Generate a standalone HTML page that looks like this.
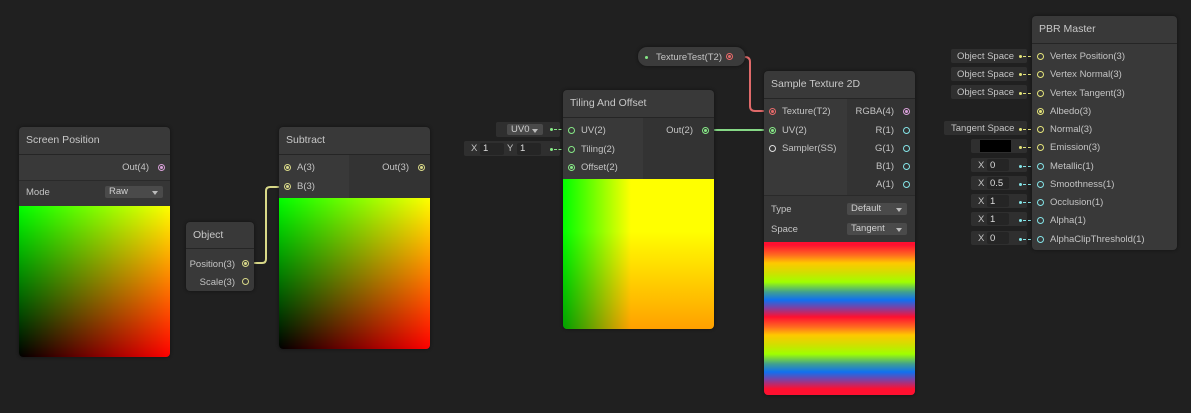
<!DOCTYPE html><html><head><style>
body{margin:0;width:1191px;height:413px;background:#202020;overflow:hidden;position:relative;font-family:"Liberation Sans",sans-serif;font-size:9.5px;color:#c4c4c4}
.n{position:absolute;background:#393939;border-radius:4px;box-shadow:0 0 3px #111}
.h{position:absolute;left:0;right:0;top:0;border-bottom:1px solid #252525;font-size:10.5px;color:#c8c8c8;padding-left:7px;box-sizing:border-box}
.t{position:absolute;white-space:nowrap}
.p{position:absolute;width:5px;height:5px;border:1.3px solid;border-radius:50%}
.p.c::after{content:"";position:absolute;left:1px;top:1px;width:3px;height:3px;border-radius:50%;background:currentColor}
.f{position:absolute;background:#2f2f2f;border-radius:2px}
.fi{position:absolute;background:#252525;border-radius:2px}
.d{position:absolute;background:#4a4a4a;border-radius:2px;color:#d0d0d0;padding-left:4px;box-sizing:border-box;line-height:13px}
.d::after{content:"";position:absolute;right:5px;top:5px;border:3.5px solid transparent;border-top:4px solid #bbb}
.sd{position:absolute;width:3px;height:3px;border-radius:50%}
.ln{position:absolute;height:1px;border-top:1px dashed}
</style></head><body>
<svg width="1191" height="413" style="position:absolute;left:0;top:0">
<defs>
<linearGradient id="g1"><stop offset="0" stop-color="#d8a0d8"/><stop offset="1" stop-color="#d8d888"/></linearGradient>
<linearGradient id="g2"><stop offset="0" stop-color="#d8d888"/><stop offset="1" stop-color="#90d880"/></linearGradient>
<linearGradient id="g3"><stop offset="0" stop-color="#d8a0d8"/><stop offset="1" stop-color="#d8d888"/></linearGradient>
</defs>
<path d="M165 168 H285" stroke="url(#g1)" stroke-width="2" fill="none"/>
<path d="M426 168 H568" stroke="url(#g2)" stroke-width="2" fill="none"/>
<path d="M249 263 H262 Q266 263 266 259 V191 Q266 187 270 187 H285" stroke="#d8d888" stroke-width="2" fill="none"/>
<path d="M710 130 H770" stroke="#86d886" stroke-width="2" fill="none"/>
<path d="M734 57 H745 Q750 57 750 62 V106 Q750 111 755 111 H770" stroke="#e06a6a" stroke-width="2" fill="none"/>
<path d="M910 111 H1038" stroke="url(#g3)" stroke-width="2" fill="none"/>
</svg>

<div class="n" style="left:19px;top:127px;width:151px;height:230px">
<div class="h" style="height:28px;line-height:27px">Screen Position</div>
<div class="t" style="right:21px;top:35px">Out(4)</div>
<div class="p c" style="right:5px;top:37px;color:#d8a0d8"></div>
<div style="position:absolute;left:0;right:0;top:53px;height:25px;background:#363636;border-top:1px solid #2a2a2a;border-bottom:1px solid #2a2a2a"></div>
<div class="t" style="left:7px;top:60px">Mode</div>
<div class="d" style="left:86px;top:59px;width:58px;height:12px;line-height:12px">Raw</div>
<div style="position:absolute;left:0;right:0;top:79px;bottom:0;border-radius:0 0 4px 4px;background:linear-gradient(to right,#000,#ff0000),linear-gradient(#00ff00,#000);background-blend-mode:screen"></div>
</div>

<div class="n" style="left:186px;top:222px;width:68px;height:69px">
<div class="h" style="height:27px;line-height:27px">Object</div>
<div class="t" style="right:19px;top:37px">Position(3)</div>
<div class="p c" style="right:5px;top:38px;color:#d8d888"></div>
<div class="t" style="right:19px;top:55px">Scale(3)</div>
<div class="p" style="right:5px;top:56px;color:#d8d888"></div>
</div>

<div class="n" style="left:279px;top:127px;width:151px;height:222px">
<div class="h" style="height:28px;line-height:27px">Subtract</div>
<div style="position:absolute;left:70px;right:0;top:28px;height:43px;background:#333"></div>
<div class="p c" style="left:5px;top:37px;color:#d8d888"></div><div class="t" style="left:18px;top:35px">A(3)</div>
<div class="p c" style="left:5px;top:56px;color:#d8d888"></div><div class="t" style="left:18px;top:54px">B(3)</div>
<div class="t" style="right:21px;top:35px">Out(3)</div>
<div class="p c" style="right:5px;top:37px;color:#d8d888"></div>
<div style="position:absolute;left:0;right:0;top:71px;bottom:0;border-radius:0 0 4px 4px;background:linear-gradient(to right,#000,#ff0000),linear-gradient(#00ff00,#000);background-blend-mode:screen"></div>
</div>

<div class="f" style="left:496px;top:122px;width:64px;height:15px"></div>
<div class="d" style="left:507px;top:124px;width:36px;height:11px;line-height:11px">UV0</div>
<div class="sd" style="left:550px;top:128px;background:#86e886"></div><div class="ln" style="left:554px;top:129px;width:12px;color:#86e886"></div>
<div class="f" style="left:464px;top:141px;width:96px;height:15px"></div>
<div class="t" style="left:471px;top:143px">X</div><div class="fi" style="left:480px;top:143px;width:24px;height:12px"></div><div class="t" style="left:483px;top:143px;color:#ddd">1</div>
<div class="t" style="left:507px;top:143px">Y</div><div class="fi" style="left:517px;top:143px;width:24px;height:12px"></div><div class="t" style="left:520px;top:143px;color:#ddd">1</div>
<div class="sd" style="left:550px;top:148px;background:#86e886"></div><div class="ln" style="left:554px;top:149px;width:12px;color:#86e886"></div>

<div class="n" style="left:563px;top:90px;width:151px;height:239px">
<div class="h" style="height:28px;line-height:27px">Tiling And Offset</div>
<div style="position:absolute;left:80px;right:0;top:28px;height:61px;background:#333"></div>
<div class="p" style="left:5px;top:37px;color:#86e886"></div><div class="t" style="left:18px;top:35px">UV(2)</div>
<div class="p" style="left:5px;top:56px;color:#86e886"></div><div class="t" style="left:18px;top:54px">Tiling(2)</div>
<div class="p c" style="left:5px;top:74px;color:#86e886"></div><div class="t" style="left:18px;top:72px">Offset(2)</div>
<div class="t" style="right:21px;top:35px">Out(2)</div>
<div class="p c" style="right:5px;top:37px;color:#86e886"></div>
<div style="position:absolute;left:0;right:0;top:89px;bottom:0;border-radius:0 0 4px 4px;background:linear-gradient(to right,#000,#ff0000 45%,#ff0000),linear-gradient(#00ff00 0%,#00ff00 35%,#00a000 100%);background-blend-mode:screen"></div>
</div>

<div style="position:absolute;left:638px;top:47px;width:107px;height:19px;border-radius:9px;background:#3b3b3b;box-shadow:0 0 3px #111"></div>
<div class="sd" style="left:645px;top:56px;background:#86e886"></div>
<div class="t" style="left:656px;top:52px">TextureTest(T2)</div>
<div class="p c" style="left:726px;top:53px;color:#e86a6a"></div>

<div class="n" style="left:764px;top:71px;width:151px;height:324px">
<div class="h" style="height:28px;line-height:27px">Sample Texture 2D</div>
<div style="position:absolute;left:83px;right:0;top:28px;height:96px;background:#333"></div>
<div class="p c" style="left:5px;top:37px;color:#e86a6a"></div><div class="t" style="left:18px;top:35px">Texture(T2)</div>
<div class="p c" style="left:5px;top:56px;color:#86e886"></div><div class="t" style="left:18px;top:54px">UV(2)</div>
<div class="p" style="left:5px;top:74px;color:#ddd"></div><div class="t" style="left:18px;top:72px">Sampler(SS)</div>
<div class="t" style="right:21px;top:35px">RGBA(4)</div><div class="p c" style="right:5px;top:37px;color:#d8a0d8"></div>
<div class="t" style="right:21px;top:54px">R(1)</div><div class="p" style="right:5px;top:56px;color:#84e4e7"></div>
<div class="t" style="right:21px;top:72px">G(1)</div><div class="p" style="right:5px;top:74px;color:#84e4e7"></div>
<div class="t" style="right:21px;top:90px">B(1)</div><div class="p" style="right:5px;top:92px;color:#84e4e7"></div>
<div class="t" style="right:21px;top:108px">A(1)</div><div class="p" style="right:5px;top:110px;color:#84e4e7"></div>
<div style="position:absolute;left:0;right:0;top:124px;height:46px;background:#363636;border-top:1px solid #2a2a2a;border-bottom:1px solid #2a2a2a"></div>
<div class="t" style="left:7px;top:133px">Type</div><div class="d" style="left:83px;top:132px;width:60px;height:12px;line-height:12px">Default</div>
<div class="t" style="left:7px;top:153px">Space</div><div class="d" style="left:83px;top:152px;width:60px;height:12px;line-height:12px">Tangent</div>
<div style="position:absolute;left:0;right:0;top:171px;height:153px;border-radius:0 0 4px 4px;background:linear-gradient(#ff1030 3px,#ff6a20 13px,#ffc800 21px,#d0e000 31px,#a0ff00 40px,#40a090 50px,#1070f0 58px,#8040a0 66px,#ff1030 75px,#ff6a20 85px,#ffc800 93px,#d0e000 103px,#a0ff00 112px,#40a090 122px,#1070f0 130px,#8040a0 138px,#ff1030 147px)"></div>
</div>

<div class="f" style="left:951px;top:49px;width:76px;height:14px"></div><div class="t" style="left:957px;top:51px">Object Space</div>
<div class="f" style="left:951px;top:67px;width:76px;height:14px"></div><div class="t" style="left:957px;top:69px">Object Space</div>
<div class="f" style="left:951px;top:85px;width:76px;height:14px"></div><div class="t" style="left:957px;top:87px">Object Space</div>
<div class="f" style="left:944px;top:121px;width:83px;height:14px"></div><div class="t" style="left:951px;top:123px">Tangent Space</div>
<div class="f" style="left:971px;top:139px;width:56px;height:14px"></div><div style="position:absolute;left:980px;top:140px;width:31px;height:12px;background:#000"></div>
<div class="f" style="left:971px;top:158px;width:56px;height:14px"></div><div class="t" style="left:978px;top:160px">X</div><div class="fi" style="left:987px;top:159px;width:22px;height:12px"></div><div class="t" style="left:990px;top:160px;color:#ddd">0</div>
<div class="f" style="left:971px;top:176px;width:56px;height:14px"></div><div class="t" style="left:978px;top:178px">X</div><div class="fi" style="left:987px;top:177px;width:22px;height:12px"></div><div class="t" style="left:990px;top:178px;color:#ddd">0.5</div>
<div class="f" style="left:971px;top:194px;width:56px;height:14px"></div><div class="t" style="left:978px;top:196px">X</div><div class="fi" style="left:987px;top:195px;width:22px;height:12px"></div><div class="t" style="left:990px;top:196px;color:#ddd">1</div>
<div class="f" style="left:971px;top:212px;width:56px;height:14px"></div><div class="t" style="left:978px;top:214px">X</div><div class="fi" style="left:987px;top:213px;width:22px;height:12px"></div><div class="t" style="left:990px;top:214px;color:#ddd">1</div>
<div class="f" style="left:971px;top:231px;width:56px;height:14px"></div><div class="t" style="left:978px;top:233px">X</div><div class="fi" style="left:987px;top:232px;width:22px;height:12px"></div><div class="t" style="left:990px;top:233px;color:#ddd">0</div>

<div class="sd" style="left:1019px;top:55px;background:#e4e47a"></div><div class="ln" style="left:1023px;top:56px;width:13px;color:#e4e47a"></div>
<div class="sd" style="left:1019px;top:73px;background:#e4e47a"></div><div class="ln" style="left:1023px;top:74px;width:13px;color:#e4e47a"></div>
<div class="sd" style="left:1019px;top:92px;background:#e4e47a"></div><div class="ln" style="left:1023px;top:93px;width:13px;color:#e4e47a"></div>
<div class="sd" style="left:1019px;top:128px;background:#e4e47a"></div><div class="ln" style="left:1023px;top:129px;width:13px;color:#e4e47a"></div>
<div class="sd" style="left:1019px;top:146px;background:#e4e47a"></div><div class="ln" style="left:1023px;top:147px;width:13px;color:#e4e47a"></div>
<div class="sd" style="left:1019px;top:165px;background:#84e4e7"></div><div class="ln" style="left:1023px;top:166px;width:13px;color:#84e4e7"></div>
<div class="sd" style="left:1019px;top:183px;background:#84e4e7"></div><div class="ln" style="left:1023px;top:184px;width:13px;color:#84e4e7"></div>
<div class="sd" style="left:1019px;top:201px;background:#84e4e7"></div><div class="ln" style="left:1023px;top:202px;width:13px;color:#84e4e7"></div>
<div class="sd" style="left:1019px;top:219px;background:#84e4e7"></div><div class="ln" style="left:1023px;top:220px;width:13px;color:#84e4e7"></div>
<div class="sd" style="left:1019px;top:238px;background:#84e4e7"></div><div class="ln" style="left:1023px;top:239px;width:13px;color:#84e4e7"></div>

<div class="n" style="left:1032px;top:16px;width:145px;height:234px">
<div class="h" style="height:28px;line-height:27px">PBR Master</div>
<div class="p" style="left:5px;top:37px;color:#e4e47a"></div><div class="t" style="left:18px;top:35px">Vertex Position(3)</div>
<div class="p" style="left:5px;top:55px;color:#e4e47a"></div><div class="t" style="left:18px;top:53px">Vertex Normal(3)</div>
<div class="p" style="left:5px;top:74px;color:#e4e47a"></div><div class="t" style="left:18px;top:72px">Vertex Tangent(3)</div>
<div class="p c" style="left:5px;top:92px;color:#e4e47a"></div><div class="t" style="left:18px;top:90px">Albedo(3)</div>
<div class="p" style="left:5px;top:110px;color:#e4e47a"></div><div class="t" style="left:18px;top:108px">Normal(3)</div>
<div class="p" style="left:5px;top:128px;color:#e4e47a"></div><div class="t" style="left:18px;top:126px">Emission(3)</div>
<div class="p" style="left:5px;top:147px;color:#84e4e7"></div><div class="t" style="left:18px;top:145px">Metallic(1)</div>
<div class="p" style="left:5px;top:165px;color:#84e4e7"></div><div class="t" style="left:18px;top:163px">Smoothness(1)</div>
<div class="p" style="left:5px;top:183px;color:#84e4e7"></div><div class="t" style="left:18px;top:181px">Occlusion(1)</div>
<div class="p" style="left:5px;top:201px;color:#84e4e7"></div><div class="t" style="left:18px;top:199px">Alpha(1)</div>
<div class="p" style="left:5px;top:220px;color:#84e4e7"></div><div class="t" style="left:18px;top:218px">AlphaClipThreshold(1)</div>
</div>
</body></html>
